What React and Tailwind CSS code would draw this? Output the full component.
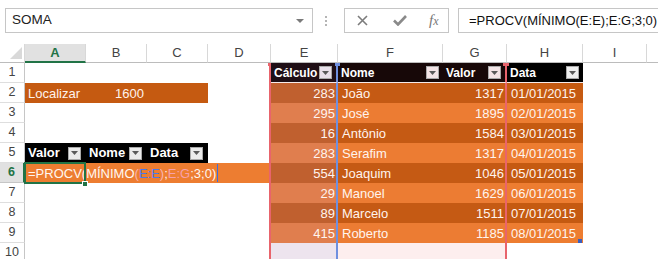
import React from 'react';

const data = [
  ['283', 'João', '1317', '01/01/2015'],
  ['295', 'José', '1895', '02/01/2015'],
  ['16', 'Antônio', '1584', '03/01/2015'],
  ['283', 'Serafim', '1317', '04/01/2015'],
  ['554', 'Joaquim', '1046', '05/01/2015'],
  ['29', 'Manoel', '1629', '06/01/2015'],
  ['89', 'Marcelo', '1511', '07/01/2015'],
  ['415', 'Roberto', '1185', '08/01/2015'],
];

const CELL = 'h-[20px] shrink-0 text-[13px] leading-[22px] whitespace-nowrap overflow-hidden';

function Drop({ tint = 'bg-[#ebebeb]' }) {
  return (
    <div className={`w-[13px] h-[13px] shrink-0 border border-[#a9a9a9] ${tint} flex items-center justify-center`}>
      <svg width="7" height="4" viewBox="0 0 7 4">
        <path d="M0 0h7L3.5 4z" fill="#5a5a5a" />
      </svg>
    </div>
  );
}

function RowHeader({ n, active }) {
  return (
    <div
      className={`w-[25px] h-[20px] shrink-0 flex items-center justify-center text-[12.5px] border-b ${
        active
          ? 'bg-[#e1e1e1] text-[#217346] font-bold border-r-2 border-r-[#217346] border-b-[#c6c6c6]'
          : 'text-[#444] border-r border-r-[#c6c6c6] border-b-[#dedede]'
      }`}
    >
      {n}
    </div>
  );
}

function LeftCells({ r }) {
  if (r === 6) {
    return (
      <div className="w-[246px] h-[20px] shrink-0 bg-[#ed7d31] border-r-2 border-r-[#e8646c] relative text-[13px] leading-[22px] whitespace-nowrap pl-[3px] text-[#fff7f2] flex items-start">
        <span>=PROCV(MÍNIMO</span>
        <span className="text-[#f9b3b0]">(</span>
        <span className="text-[#4a78ea]">E:E</span>
        <span className="text-[#f9b3b0]">)</span>
        <span>;</span>
        <span className="text-[#f7a0aa]">E:G</span>
        <span>;3;0)</span>
        <span className="ml-[1px] mt-[1px] w-px h-[18px] bg-[#3f6fd8]" />
        <div className="absolute left-[-1px] top-[-1px] w-[62px] h-[22px] border-2 border-[#217346]" />
        <div className="absolute left-[57px] top-[18px] w-[6px] h-[6px] bg-[#217346] border border-white" />
      </div>
    );
  }
  let a, b, c;
  if (r === 2) {
    a = <div className={`${CELL} w-[61px] bg-[#c55a11] text-[#fff3ec] pl-[3px]`}>Localizar</div>;
    b = <div className={`${CELL} w-[61px] bg-[#c55a11] text-[#fff3ec] text-right pr-[3px]`}>1600</div>;
    c = <div className={`${CELL} w-[61px] bg-[#c55a11]`} />;
  } else if (r === 5) {
    const hc = 'h-[20px] shrink-0 bg-black text-white font-bold text-[13px] flex items-center justify-between pl-[3px] pr-[5px]';
    a = <div className={`${hc} w-[61px]`}><span className="leading-[22px]">Valor</span><Drop /></div>;
    b = <div className={`${hc} w-[61px]`}><span className="leading-[22px]">Nome</span><Drop /></div>;
    c = <div className={`${hc} w-[61px]`}><span className="leading-[22px]">Data</span><Drop /></div>;
  } else {
    a = <div className={`${CELL} w-[61px]`} />;
    b = <div className={`${CELL} w-[61px]`} />;
    c = <div className={`${CELL} w-[61px]`} />;
  }
  return (
    <>
      {a}
      {b}
      {c}
      <div className={`${CELL} w-[63px] border-r-2 border-r-[#e8646c] ${r === 1 ? 'overflow-visible relative' : ''}`}>
        {r === 1 && <div className="absolute right-[-4px] top-0 w-[5px] h-[3px] bg-[#e8646c]" />}
      </div>
    </>
  );
}

function RightCells({ r }) {
  if (r === 1) {
    const hc = 'h-[20px] shrink-0 text-white font-bold text-[12px] flex items-center justify-between pl-[3px] pr-[4px] border-b border-b-[#f6eaea]';
    return (
      <>
        <div className={`${hc} w-[67px] bg-[#1f0f16] border-r-2 border-r-[#6e8fdf] relative`}>
          <span className="leading-[22px]">Cálculo</span>
          <Drop tint="bg-[#e8e0ea]" />
          <div className="absolute right-[-4px] top-0 w-[5px] h-[3px] bg-[#6e8fdf]" />
        </div>
        <div className={`${hc} w-[105px] bg-[#170808]`}>
          <span className="leading-[22px]">Nome</span>
          <Drop tint="bg-[#f3e4e6]" />
        </div>
        <div className={`${hc} w-[64px] bg-[#170808] border-r-2 border-r-[#e8646c] relative`}>
          <span className="leading-[22px]">Valor</span>
          <Drop tint="bg-[#f3e4e6]" />
          <div className="absolute right-[-4px] top-0 w-[6px] h-[3px] bg-[#e8646c]" />
        </div>
        <div className={`${hc} w-[76px] bg-black`}>
          <span className="leading-[22px]">Data</span>
          <Drop tint="bg-[#efefef]" />
        </div>
        <div className={`${CELL} w-[64px]`} />
        <div className={`${CELL} w-[11px]`} />
      </>
    );
  }
  if (r === 10) {
    return (
      <>
        <div className={`${CELL} w-[67px] bg-[#ede4ee] border-r-2 border-r-[#6e8fdf]`} />
        <div className={`${CELL} w-[105px] bg-[#fdeeee]`} />
        <div className={`${CELL} w-[64px] bg-[#fdeeee] border-r-2 border-r-[#e8646c]`} />
        <div className={`${CELL} w-[76px]`} />
        <div className={`${CELL} w-[64px]`} />
        <div className={`${CELL} w-[11px]`} />
      </>
    );
  }
  const [v, nome, valor, dt] = data[r - 2];
  const dark = r % 2 === 0;
  const txt = 'text-[#fff4ee]';
  return (
    <>
      <div className={`${CELL} w-[67px] ${dark ? 'bg-[#c0602f]' : 'bg-[#e07e4e]'} border-r-2 border-r-[#6e8fdf] text-right pr-[1px] ${txt}`}>{v}</div>
      <div className={`${CELL} w-[105px] ${dark ? 'bg-[#c55a14]' : 'bg-[#ec7c33]'} pl-[4px] ${txt}`}>{nome}</div>
      <div className={`${CELL} w-[64px] ${dark ? 'bg-[#c55a14]' : 'bg-[#ec7c33]'} border-r-2 border-r-[#e8646c] text-right pr-[1px] ${txt}`}>{valor}</div>
      <div className={`${CELL} w-[76px] ${dark ? 'bg-[#c55a11]' : 'bg-[#ed7d31]'} pl-[4px] ${txt} relative`}>
        {dt}
        {r === 9 && <div className="absolute right-[1px] bottom-0 w-[4px] h-[4px] bg-[#3b5fc0]" />}
      </div>
      <div className={`${CELL} w-[64px]`} />
      <div className={`${CELL} w-[11px]`} />
    </>
  );
}

export default function App() {
  const cols = [
    ['A', 'w-[61px]'],
    ['B', 'w-[61px]'],
    ['C', 'w-[61px]'],
    ['D', 'w-[63px]'],
    ['E', 'w-[67px]'],
    ['F', 'w-[105px]'],
    ['G', 'w-[64px]'],
    ['H', 'w-[76px]'],
    ['I', 'w-[64px]'],
  ];
  return (
    <div className="w-[658px] h-[259px] overflow-hidden bg-white font-['Liberation_Sans',Arial,sans-serif] text-[#222]">
      {/* formula bar */}
      <div className="h-[44px] flex items-start pt-[8px]">
        <div className="ml-[5px] w-[308px] h-[25px] shrink-0 border border-[#c6c6c6] flex items-center justify-between pl-[6px] pr-[8px]">
          <span className="text-[13.5px] text-[#222]">SOMA</span>
          <svg width="8" height="4" viewBox="0 0 8 4">
            <path d="M0 0h8L4 4z" fill="#7a7a7a" />
          </svg>
        </div>
        <div className="w-[31px] h-[25px] shrink-0 flex flex-col justify-center gap-[2px] pl-[12px]">
          <div className="w-[2px] h-[2px] bg-[#b5b5b5]" />
          <div className="w-[2px] h-[2px] bg-[#b5b5b5]" />
          <div className="w-[2px] h-[2px] bg-[#b5b5b5]" />
        </div>
        <div className="w-[105px] h-[25px] shrink-0 border border-[#c6c6c6] flex items-center">
          <svg className="ml-[12px]" width="11" height="11" viewBox="0 0 11 11">
            <path d="M1 1L10 10M10 1L1 10" stroke="#7c7c7c" strokeWidth="1.6" fill="none" />
          </svg>
          <svg className="ml-[25px]" width="14" height="11" viewBox="0 0 14 11">
            <path d="M1 5.5L5 9.5L13 1" stroke="#8a8a8a" strokeWidth="2.6" fill="none" />
          </svg>
          <span className="ml-[22px] font-['Liberation_Serif',serif] italic text-[15px] text-[#777] leading-none">
            f<span className="text-[12px]">x</span>
          </span>
        </div>
        <div className="ml-[9px] flex-1 h-[25px] border border-r-0 border-[#c6c6c6] flex items-center pl-[10px] text-[13px] text-[#111] whitespace-nowrap overflow-hidden">
          =PROCV(MÍNIMO(E:E);E:G;3;0)
        </div>
      </div>

      {/* column headers */}
      <div className="flex h-[19px]">
        <div className="w-[25px] h-[19px] shrink-0 border-r border-r-[#d8d8d8] border-b border-b-[#bcbcbc] relative">
          <svg className="absolute left-0 top-0" width="25" height="19" viewBox="0 0 25 19">
            <path d="M22 3L22 15L10 15z" fill="#d9d9d9" />
          </svg>
        </div>
        {cols.map(([l, w]) => (
          <div
            key={l}
            className={`${w} h-[19px] shrink-0 flex items-center justify-center text-[13px] border-r border-r-[#d8d8d8] ${
              l === 'A'
                ? 'bg-[#e1e1e1] text-[#217346] font-bold border-b-2 border-b-[#217346]'
                : 'text-[#444] border-b border-b-[#bcbcbc]'
            }`}
          >
            {l}
          </div>
        ))}
        <div className="w-[11px] h-[19px] shrink-0 border-b border-b-[#bcbcbc]" />
      </div>

      {/* rows */}
      {[1, 2, 3, 4, 5, 6, 7, 8, 9, 10].map((r) => (
        <div key={r} className="flex h-[20px]">
          <RowHeader n={r} active={r === 6} />
          <LeftCells r={r} />
          <RightCells r={r} />
        </div>
      ))}
    </div>
  );
}
